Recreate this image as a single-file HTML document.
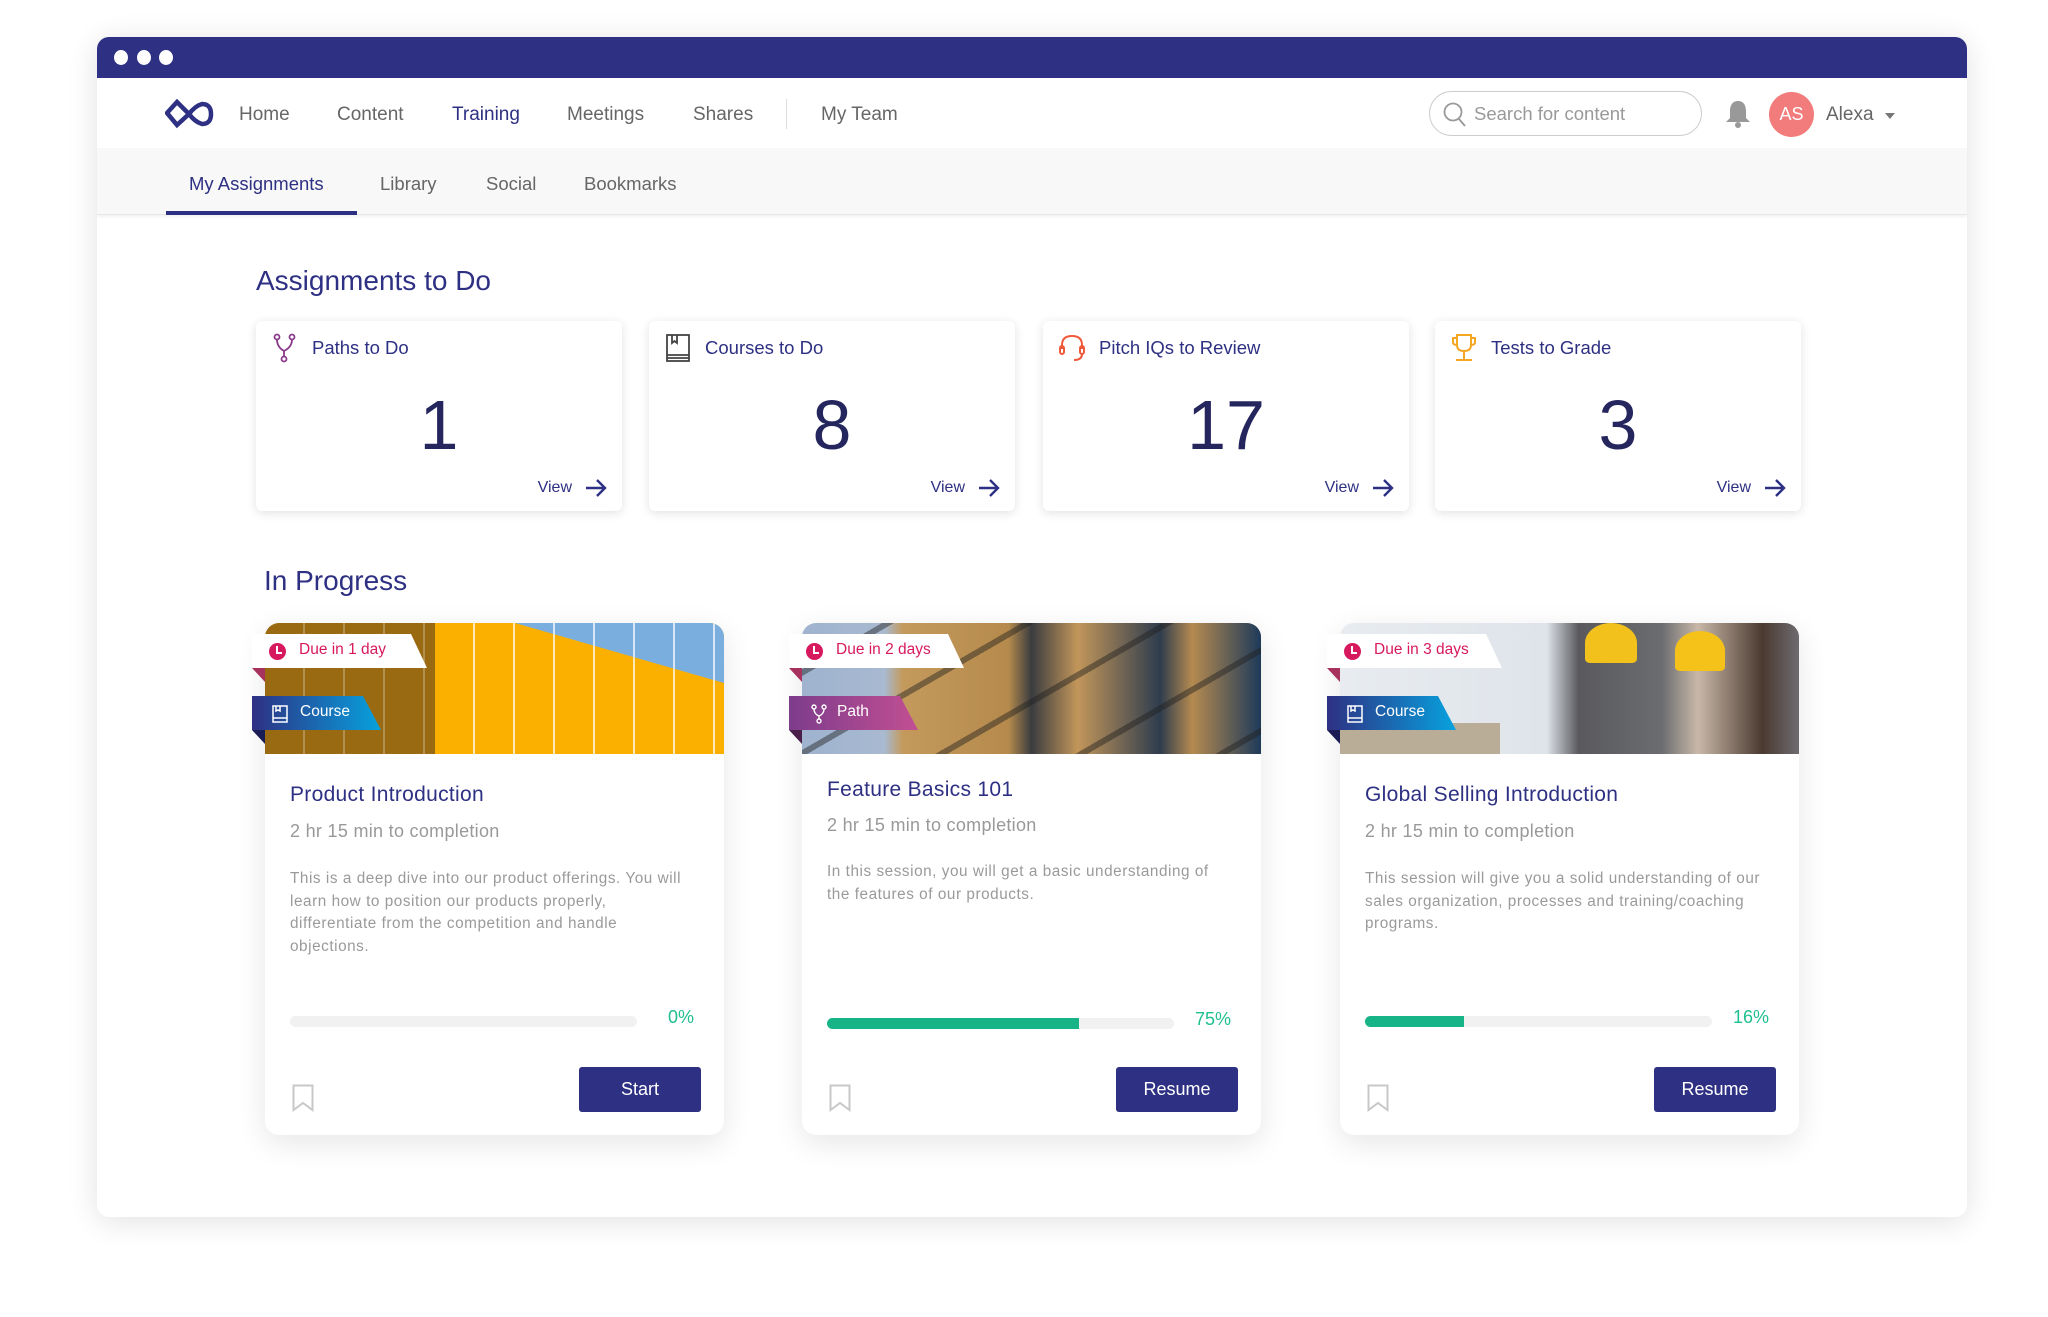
<!DOCTYPE html>
<html><head><meta charset="utf-8"><style>
*{margin:0;padding:0;box-sizing:border-box}
body{width:2048px;height:1317px;background:#fff;position:relative;overflow:hidden;font-family:"Liberation Sans",sans-serif}
.a{position:absolute}
.win{left:97px;top:37px;width:1870px;height:1180px;background:#fff;border-radius:12px;box-shadow:0 4px 30px rgba(0,0,0,.12);overflow:hidden}
.tb{left:0;top:0;width:1870px;height:41px;background:#2e3083}
.dot{width:14px;height:15px;border-radius:50%;background:#fff;top:13px}
.nav{font-size:19px;color:#666;top:67px}
.sub{font-size:18.5px;color:#666;top:136px}
.card{background:#fff;border-radius:6px;box-shadow:0 2px 10px rgba(0,0,0,.12)}
.ct{font-size:18.5px;color:#2e3083;top:16px;left:56px}
.num{font-size:70px;color:#25265e;width:100%;text-align:center;top:64px;left:0}
.view{font-size:16px;color:#2e3083;top:158px;right:50px}
.arr{right:14px;top:157px}
.cc{background:#fff;border-radius:14px;box-shadow:0 8px 30px rgba(0,0,0,.10);width:459px;height:512px}
.img{left:0;top:0;width:459px;height:131px;border-radius:14px 14px 0 0;overflow:hidden}
.due{left:-13px;top:11px;width:175px;height:34px;background:#fff;clip-path:polygon(0 0,159px 0,175px 34px,0 34px);box-shadow:0 2px 4px rgba(0,0,0,.1)}
.due span{position:absolute;left:47px;top:7px;font-size:15.5px;color:#d7195e}
.clk{left:17px;top:9px;width:17px;height:17px;border-radius:50%;background:#d7195e}
.clk:after{content:"";position:absolute;left:7px;top:3px;width:4px;height:6px;border-left:2px solid #fff;border-bottom:2px solid #fff}
.f1{left:-13px;top:45px;width:0;height:0;border-top:14px solid #a8325e;border-left:13px solid transparent}
.tag{left:-13px;top:73px;width:129px;height:34px;clip-path:polygon(0 0,111px 0,129px 34px,0 34px)}
.tag span{position:absolute;left:48px;top:7px;font-size:15.5px;color:#fff}
.f2{left:-13px;top:107px;width:0;height:0;border-top:14px solid #1b1c55;border-left:13px solid transparent}
.title{left:25px;font-size:21px;color:#2e3083;letter-spacing:.3px}
.dur{left:25px;font-size:18px;color:#999;letter-spacing:.3px}
.desc{left:25px;width:398px;font-size:15.3px;line-height:22.7px;color:#9a9a9a;letter-spacing:.55px}
.bar{left:25px;top:393px;width:347px;height:11px;border-radius:6px;background:#f1f1f1;overflow:hidden}
.bar i{display:block;height:100%;background:#16b487}
.pct{right:30px;top:384px;font-size:18px;color:#1fbf8f}
.btn{right:23px;top:444px;width:122px;height:45px;background:#2e3083;border-radius:3px;color:#fff;font-size:18px;text-align:center;line-height:45px}
.bm{left:27px;top:461px}
</style></head><body>
<div class="a win">
 <div class="a tb"></div>
 <div class="a dot" style="left:17px"></div><div class="a dot" style="left:40px"></div><div class="a dot" style="left:62px"></div>
 <svg class="a" style="left:68px;top:62px" width="50" height="30" viewBox="0 0 50 30"><path d="M24 15 L12 3 L2 14 L12 26 L24 15 Q30 7 37 5 Q46 5 46 15 Q46 25 37 25 Q30 23 24 15" fill="none" stroke="#2e3083" stroke-width="4.5" stroke-linejoin="miter"/></svg>
 <div class="a nav" style="left:142px">Home</div>
 <div class="a nav" style="left:240px">Content</div>
 <div class="a nav" style="left:355px;color:#2e3083">Training</div>
 <div class="a nav" style="left:470px">Meetings</div>
 <div class="a nav" style="left:596px">Shares</div>
 <div class="a" style="left:689px;top:62px;width:1px;height:30px;background:#ddd"></div>
 <div class="a nav" style="left:724px">My Team</div>
 <div class="a" style="left:1332px;top:54px;width:273px;height:45px;border:1.5px solid #ccc;border-radius:23px"></div>
 <svg class="a" style="left:1345px;top:64px" width="26" height="28" viewBox="0 0 26 28"><circle cx="11" cy="11" r="8.5" fill="none" stroke="#999" stroke-width="1.8"/><path d="M17 18 L23 25" stroke="#999" stroke-width="1.8"/></svg>
 <div class="a" style="left:1377px;top:66px;font-size:18.5px;color:#999">Search for content</div>
 <svg class="a" style="left:1627px;top:62px" width="28" height="30" viewBox="0 0 28 30"><path d="M14 2 C8 2 6 7 6 12 L6 19 L2 23 L26 23 L22 19 L22 12 C22 7 20 2 14 2Z" fill="#999"/><circle cx="14" cy="26" r="3" fill="#999"/></svg>
 <div class="a" style="left:1672px;top:55px;width:45px;height:45px;border-radius:50%;background:#f27b7b;color:#fff;font-size:18px;text-align:center;line-height:45px">AS</div>
 <div class="a nav" style="left:1729px;top:67px">Alexa</div>
 <div class="a" style="left:1788px;top:76px;border-left:5px solid transparent;border-right:5px solid transparent;border-top:6px solid #777"></div>
 <div class="a" style="left:0;top:111px;width:1870px;height:67px;background:#f8f8f8;border-bottom:1px solid #e6e6e6;box-shadow:0 2px 3px rgba(0,0,0,.05)"></div>
 <div class="a sub" style="left:92px;color:#2e3083">My Assignments</div>
 <div class="a sub" style="left:283px">Library</div>
 <div class="a sub" style="left:389px">Social</div>
 <div class="a sub" style="left:487px">Bookmarks</div>
 <div class="a" style="left:69px;top:174px;width:191px;height:4px;background:#2e3083"></div>
 <div class="a" style="left:159px;top:228px;font-size:28px;color:#2e3083">Assignments to Do</div>
 <div class="a card" style="left:159px;top:284px;width:366px;height:190px">
  <svg class="a" style="left:16px;top:12px" width="26" height="30" viewBox="0 0 26 30"><g fill="none" stroke="#8b3a8b" stroke-width="1.8"><circle cx="5" cy="4" r="2.5"/><circle cx="20" cy="4" r="2.5"/><circle cx="12" cy="26" r="2.5"/><path d="M5 6.5 Q5 14 12 18 Q20 14 20 6.5 M12 18 L12 23.5"/></g></svg>
  <div class="a ct">Paths to Do</div><div class="a num">1</div><div class="a view">View</div>
  <svg class="a arr" width="24" height="20" viewBox="0 0 24 20"><path d="M2 10 H21 M13 2 L21 10 L13 18" fill="none" stroke="#2e3083" stroke-width="2.4"/></svg></div>
 <div class="a card" style="left:552px;top:284px;width:366px;height:190px">
  <svg class="a" style="left:16px;top:12px" width="26" height="30" viewBox="0 0 26 30"><g fill="none" stroke="#444" stroke-width="1.8"><rect x="2" y="2" width="22" height="26"/><path d="M2 22 H24 M2 25 H24 M7 2 V10 L9.5 8 L12 10 V2"/></g></svg>
  <div class="a ct">Courses to Do</div><div class="a num">8</div><div class="a view">View</div>
  <svg class="a arr" width="24" height="20" viewBox="0 0 24 20"><path d="M2 10 H21 M13 2 L21 10 L13 18" fill="none" stroke="#2e3083" stroke-width="2.4"/></svg></div>
 <div class="a card" style="left:946px;top:284px;width:366px;height:190px">
  <svg class="a" style="left:14px;top:12px" width="30" height="30" viewBox="0 0 30 30"><g fill="none" stroke="#f05a3c" stroke-width="2"><path d="M5 16 V12 Q5 3 15 3 Q25 3 25 12 V16"/><rect x="3" y="13" width="4" height="8" rx="2"/><rect x="23" y="13" width="4" height="8" rx="2"/><path d="M25 21 Q25 27 17 27"/></g></svg>
  <div class="a ct">Pitch IQs to Review</div><div class="a num">17</div><div class="a view">View</div>
  <svg class="a arr" width="24" height="20" viewBox="0 0 24 20"><path d="M2 10 H21 M13 2 L21 10 L13 18" fill="none" stroke="#2e3083" stroke-width="2.4"/></svg></div>
 <div class="a card" style="left:1338px;top:284px;width:366px;height:190px">
  <svg class="a" style="left:15px;top:12px" width="28" height="30" viewBox="0 0 28 30"><g fill="none" stroke="#f5a623" stroke-width="2"><path d="M7 2 H21 V12 Q21 18 14 18 Q7 18 7 12Z M7 5 H3 V9 Q3 12 7 12 M21 5 H25 V9 Q25 12 21 12 M14 18 V26 M6 27 H22"/></g></svg>
  <div class="a ct">Tests to Grade</div><div class="a num">3</div><div class="a view">View</div>
  <svg class="a arr" width="24" height="20" viewBox="0 0 24 20"><path d="M2 10 H21 M13 2 L21 10 L13 18" fill="none" stroke="#2e3083" stroke-width="2.4"/></svg></div>
 <div class="a" style="left:167px;top:528px;font-size:28px;color:#2e3083">In Progress</div>

 <div class="a cc" style="left:168px;top:586px">
  <div class="a img" style="background:linear-gradient(90deg,#9a6a12 0,#9a6a12 37%,#fbb000 37%)">
   <div class="a" style="left:0;top:0;width:459px;height:131px;background:#7aaede;clip-path:polygon(250px 0,459px 0,459px 60px)"></div>
   <div class="a" style="left:170px;top:0;width:289px;height:131px;background:repeating-linear-gradient(90deg,transparent 0 38px,rgba(255,255,255,.7) 38px 40px)"></div>
   <div class="a" style="left:0;top:0;width:170px;height:131px;background:repeating-linear-gradient(90deg,transparent 0 38px,rgba(255,255,255,.25) 38px 40px)"></div>
  </div>
  <div class="a f1"></div><div class="a due"><div class="a clk"></div><span>Due in 1 day</span></div>
  <div class="a f2"></div><div class="a tag" style="background:linear-gradient(90deg,#2e3083,#07a2de)"><svg class="a" style="left:20px;top:9px" width="16" height="18" viewBox="0 0 16 18"><g fill="none" stroke="#fff" stroke-width="1.5"><rect x="1" y="1" width="14" height="16"/><path d="M1 13 H15 M4 1 V6 L6 5 L8 6 V1"/></g></svg><span>Course</span></div>
  <div class="a title" style="top:160px">Product Introduction</div>
  <div class="a dur" style="top:198px">2 hr 15 min to completion</div>
  <div class="a desc" style="top:245px">This is a deep dive into our product offerings. You will learn how to position our products properly, differentiate from the competition and handle objections.</div>
  <div class="a bar"><i style="width:0"></i></div><div class="a pct">0%</div>
  <svg class="a bm" width="22" height="28" viewBox="0 0 22 28"><path d="M1.5 1.5 H20.5 V26 L11 19 L1.5 26Z" fill="none" stroke="#c8c8c8" stroke-width="2"/></svg>
  <div class="a btn">Start</div>
 </div>

 <div class="a cc" style="left:705px;top:586px">
  <div class="a img" style="background:linear-gradient(90deg,#9fb3cf 0,#a8b9d0 18%,#c49a5c 22%,#b58a4c 45%,#3a3c40 50%,#c2965a 60%,#2e3c4e 78%,#b58a50 85%,#1e3a5a 100%)">
   <div class="a" style="left:0;top:0;width:459px;height:131px;background:repeating-linear-gradient(150deg,transparent 0 40px,rgba(30,30,30,.45) 40px 46px,transparent 46px 70px)"></div>
  </div>
  <div class="a f1"></div><div class="a due"><div class="a clk"></div><span>Due in 2 days</span></div>
  <div class="a f2" style="border-top-color:#4a1f4a"></div><div class="a tag" style="background:linear-gradient(90deg,#7d3c8c,#c24f92)"><svg class="a" style="left:22px;top:8px" width="16" height="20" viewBox="0 0 16 20"><g fill="none" stroke="#fff" stroke-width="1.4"><circle cx="3" cy="3" r="2"/><circle cx="13" cy="3" r="2"/><circle cx="8" cy="17" r="2"/><path d="M3 5 Q3 10 8 12 Q13 10 13 5 M8 12 V15"/></g></svg><span>Path</span></div>
  <div class="a title" style="top:155px">Feature Basics 101</div>
  <div class="a dur" style="top:192px">2 hr 15 min to completion</div>
  <div class="a desc" style="top:238px">In this session, you will get a basic understanding of the features of our products.</div>
  <div class="a bar" style="top:395px"><i style="width:72.5%"></i></div><div class="a pct" style="top:386px">75%</div>
  <svg class="a bm" width="22" height="28" viewBox="0 0 22 28"><path d="M1.5 1.5 H20.5 V26 L11 19 L1.5 26Z" fill="none" stroke="#c8c8c8" stroke-width="2"/></svg>
  <div class="a btn">Resume</div>
 </div>

 <div class="a cc" style="left:1243px;top:586px">
  <div class="a img" style="background:linear-gradient(90deg,#e8ecf0 0,#dfe4ea 45%,#5a5a5e 52%,#6a6c70 70%,#c9b8a8 78%,#4a3a30 92%,#6e6a70 100%)">
   <div class="a" style="left:245px;top:0;width:52px;height:40px;border-radius:50% 50% 10% 10%;background:#f2c11c"></div>
   <div class="a" style="left:335px;top:8px;width:50px;height:40px;border-radius:50% 50% 10% 10%;background:#f5c21a"></div>
   <div class="a" style="left:0;top:100px;width:160px;height:31px;background:#b9ad98"></div>
  </div>
  <div class="a f1"></div><div class="a due"><div class="a clk"></div><span>Due in 3 days</span></div>
  <div class="a f2"></div><div class="a tag" style="background:linear-gradient(90deg,#2e3083,#07a2de)"><svg class="a" style="left:20px;top:9px" width="16" height="18" viewBox="0 0 16 18"><g fill="none" stroke="#fff" stroke-width="1.5"><rect x="1" y="1" width="14" height="16"/><path d="M1 13 H15 M4 1 V6 L6 5 L8 6 V1"/></g></svg><span>Course</span></div>
  <div class="a title" style="top:160px">Global Selling Introduction</div>
  <div class="a dur" style="top:198px">2 hr 15 min to completion</div>
  <div class="a desc" style="top:245px">This session will give you a solid understanding of our sales organization, processes and training/coaching programs.</div>
  <div class="a bar"><i style="width:28.5%"></i></div><div class="a pct">16%</div>
  <svg class="a bm" width="22" height="28" viewBox="0 0 22 28"><path d="M1.5 1.5 H20.5 V26 L11 19 L1.5 26Z" fill="none" stroke="#c8c8c8" stroke-width="2"/></svg>
  <div class="a btn">Resume</div>
 </div>
</div>
</body></html>
